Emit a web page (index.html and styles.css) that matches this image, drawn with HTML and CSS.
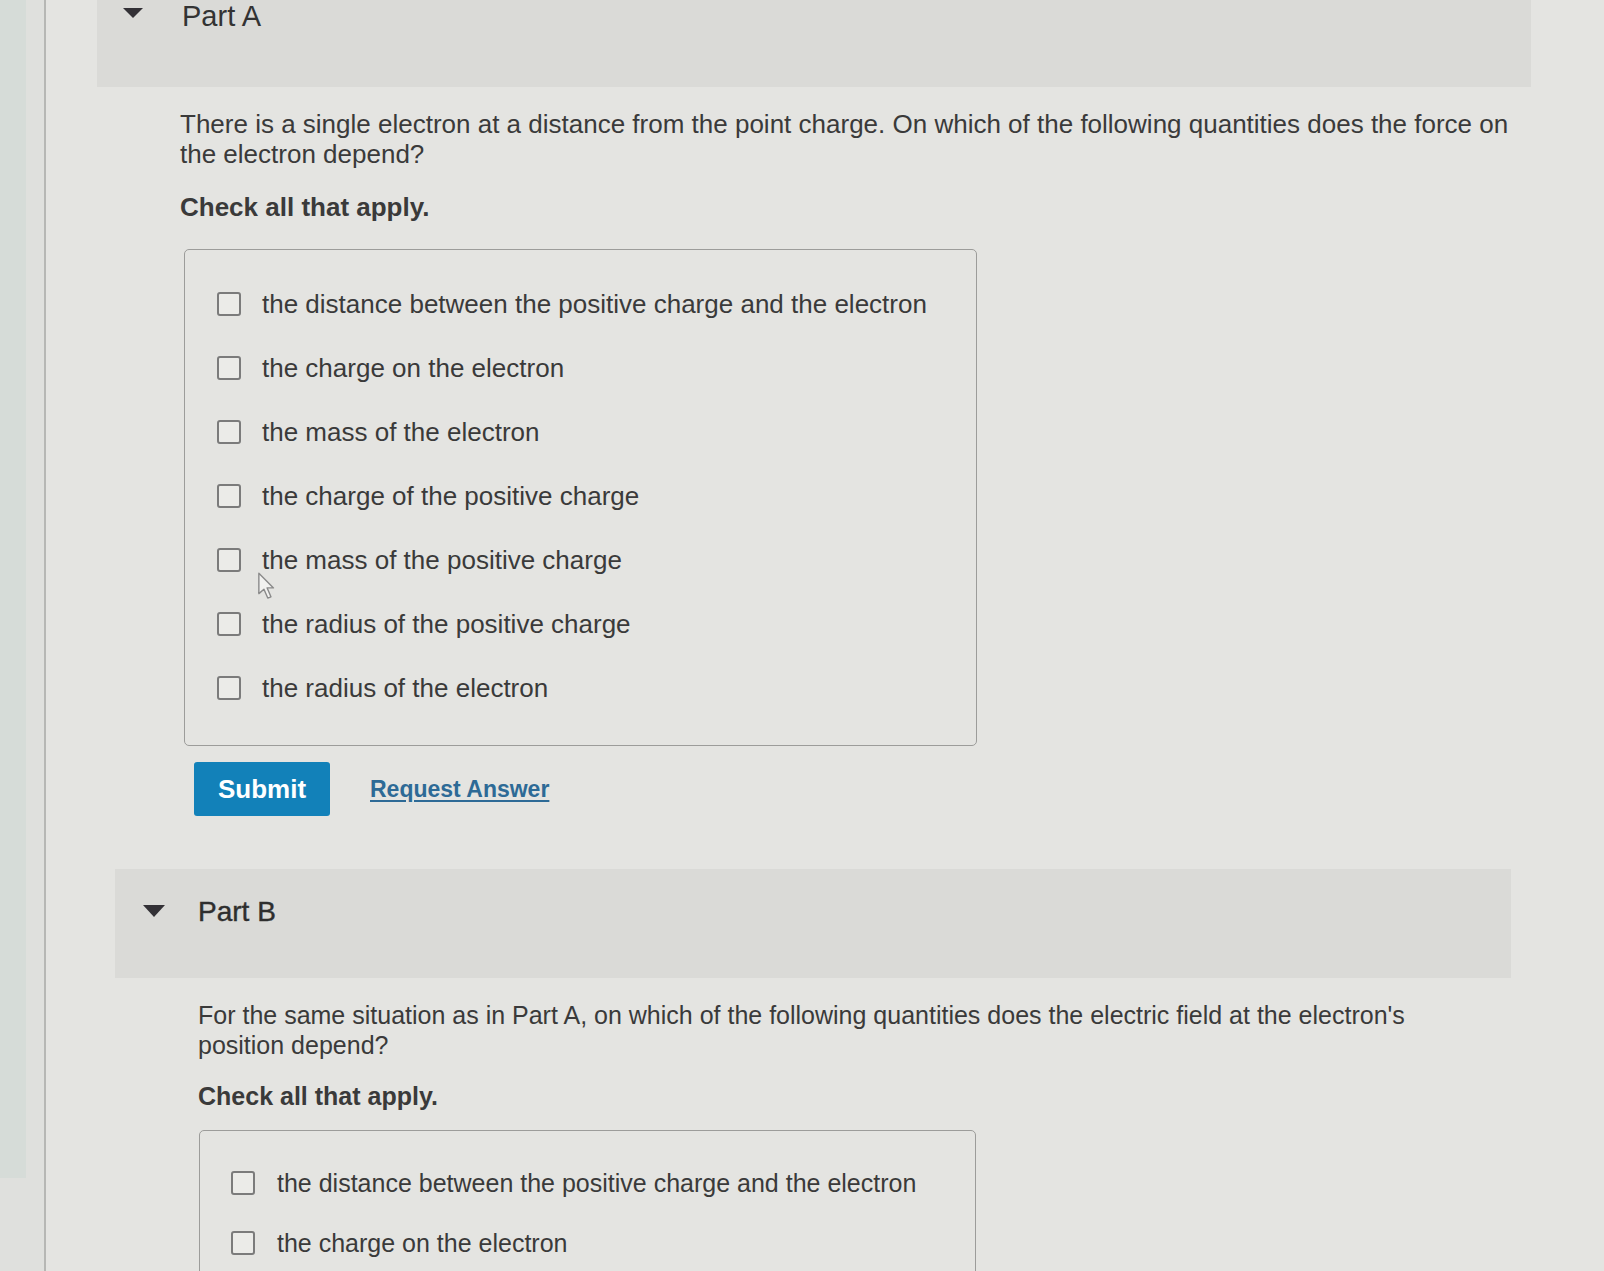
FILE: index.html
```html
<!DOCTYPE html>
<html lang="en">
<head>
<meta charset="utf-8">
<title>Part A / Part B</title>
<link rel="stylesheet" href="styles.css">
</head>
<body>
<div class="page">
  <div class="rail"><div class="rail-strip"></div></div>
  <main class="main">
    <section class="part part-a">
      <header class="part-head">
        <span class="caret"></span>
        <h2 class="part-title">Part A</h2>
      </header>
      <div class="part-body">
        <p class="question">There is a single electron at a distance from the point charge. On which of the following quantities does the force on the electron depend?</p>
        <p class="instr">Check all that apply.</p>
        <div class="options">
          <label class="opt"><span class="box"></span><span>the distance between the positive charge and the electron</span></label>
          <label class="opt"><span class="box"></span><span>the charge on the electron</span></label>
          <label class="opt"><span class="box"></span><span>the mass of the electron</span></label>
          <label class="opt"><span class="box"></span><span>the charge of the positive charge</span></label>
          <label class="opt"><span class="box"></span><span>the mass of the positive charge</span>
            <svg class="cursor" viewBox="0 0 14 22" width="19" height="28"><path d="M1 1 L1 17 L5 13.5 L8 20.5 L10.5 19.5 L7.5 12.5 L12.5 12.5 Z" fill="#f2f2f0" stroke="#8a8a8a" stroke-width="1.1" stroke-linejoin="round"/></svg>
          </label>
          <label class="opt"><span class="box"></span><span>the radius of the positive charge</span></label>
          <label class="opt"><span class="box"></span><span>the radius of the electron</span></label>
        </div>
        <div class="actions">
          <button class="submit" type="button">Submit</button>
          <a class="request" href="#">Request Answer</a>
        </div>
      </div>
    </section>

    <section class="part part-b">
      <header class="part-head">
        <span class="caret"></span>
        <h2 class="part-title">Part B</h2>
      </header>
      <div class="part-body">
        <p class="question">For the same situation as in Part A, on which of the following quantities does the electric field at the electron's position depend?</p>
        <p class="instr">Check all that apply.</p>
        <div class="options">
          <label class="opt"><span class="box"></span><span>the distance between the positive charge and the electron</span></label>
          <label class="opt"><span class="box"></span><span>the charge on the electron</span></label>
        </div>
      </div>
    </section>
  </main>
</div>
</body>
</html>
```
FILE: styles.css
```css
html, body {
  margin: 0;
  padding: 0;
  height: 1271px;
  overflow: hidden;
}
body {
  background: #e4e4e1;
  color: #3a3a3a;
  font-family: "Liberation Sans", Arial, sans-serif;
}
.page {
  display: flex;
  min-height: 1271px;
}
.rail {
  flex: none;
  width: 44px;
  border-right: 2px solid #b6b7b4;
  background: #dfe0dd;
}
.rail-strip {
  width: 26px;
  height: 1178px;
  background: #d6dcd8;
}
.main {
  flex: 1;
  min-width: 0;
}
.part-head {
  display: flex;
  align-items: flex-start;
  background: #dadad7;
}
.caret {
  flex: none;
  width: 0;
  height: 0;
  border-left: 10px solid transparent;
  border-right: 10px solid transparent;
  border-top: 10px solid #333136;
}
.part-title {
  margin: 0;
  font-size: 29px;
  line-height: 32px;
  font-weight: normal;
  color: #333;
}
.question, .instr {
  margin: 0;
  font-size: 26px;
  line-height: 30px;
}
.instr {
  font-weight: bold;
}
.options {
  border: 1.5px solid #9c9c9a;
  border-radius: 5px;
}
.opt {
  position: relative;
  display: flex;
  align-items: center;
  height: 64px;
  font-size: 26px;
}
.box {
  flex: none;
  width: 20px;
  height: 20px;
  border: 2px solid #7b7b7b;
  border-radius: 3px;
  background: #ebebe8;
}
.cursor {
  position: absolute;
  left: 72px;
  top: 44px;
}

/* Part A */
.part-a .part-head {
  margin: 0 73px 0 51px;
  height: 87px;
  padding-left: 26px;
}
.part-a .caret {
  margin-top: 8px;
  margin-right: 39px;
}
.part-a .part-body {
  padding-left: 134px;
}
.part-a .question {
  margin-top: 22px;
  max-width: 1360px;
}
.part-a .instr {
  margin-top: 23px;
}
.part-a .options {
  margin-top: 27px;
  margin-left: 4px;
  width: 793px;
  padding: 22px 0 25px;
  box-sizing: border-box;
}
.part-a .opt {
  padding-left: 32px;
  gap: 21px;
}
.actions {
  display: flex;
  align-items: center;
  gap: 40px;
  margin-top: 16px;
  margin-left: 14px;
}
.submit {
  width: 136px;
  height: 54px;
  border: none;
  border-radius: 3px;
  background: #1281b9;
  color: #fff;
  font-family: inherit;
  font-size: 26px;
  font-weight: bold;
  padding: 0;
}
.request {
  color: #2d6a96;
  font-size: 23px;
  font-weight: bold;
  text-decoration: underline;
  text-underline-offset: 3px;
}

/* Part B */
.part-b {
  margin-top: 53px;
}
.part-b .part-head {
  margin: 0 93px 0 69px;
  height: 109px;
  box-sizing: border-box;
  padding: 27px 0 0 28px;
}
.part-b .caret {
  margin-top: 9px;
  margin-right: 33px;
  border-left-width: 11.5px;
  border-right-width: 11.5px;
  border-top-width: 12px;
}
.part-b .part-title {
  font-size: 28px;
  color: #2e2e2e;
  -webkit-text-stroke: 0.4px #2e2e2e;
}
.part-b .part-body {
  padding-left: 152px;
}
.part-b .question, .part-b .instr {
  font-size: 25px;
}
.part-b .question {
  margin-top: 22px;
  max-width: 1260px;
}
.part-b .instr {
  margin-top: 21px;
}
.part-b .options {
  margin-top: 19px;
  margin-left: 1px;
  width: 775px;
  padding: 22px 0 120px;
}
.part-b .opt {
  height: 60px;
  font-size: 25px;
  padding-left: 31px;
  gap: 22px;
}
```
